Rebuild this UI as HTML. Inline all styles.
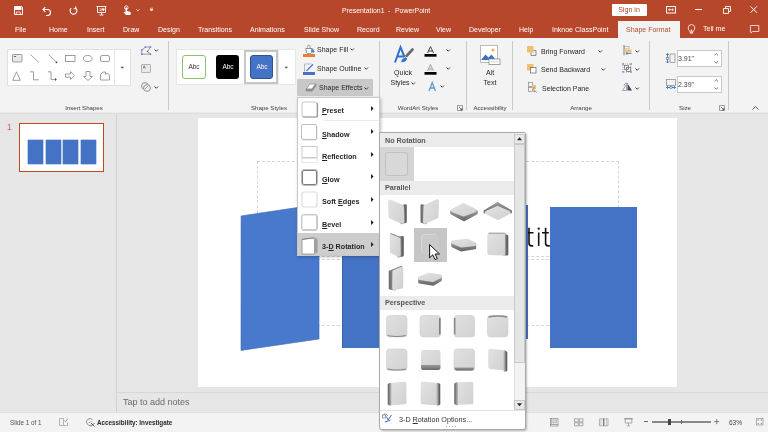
<!DOCTYPE html><html><head><meta charset="utf-8"><style>
html,body{margin:0;padding:0;}
body{width:768px;height:432px;overflow:hidden;position:relative;background:#E6E6E6;font-family:"Liberation Sans",sans-serif;}
.t{position:absolute;white-space:pre;will-change:transform;}
.r{position:absolute;}
svg.r{overflow:visible;}
u{text-decoration-thickness:0.6px;text-underline-offset:0.8px;}
</style></head><body>
<div class="r" style="left:0px;top:0px;width:768px;height:38px;background:#B7472A"></div>
<div class="r" style="left:0px;top:38px;width:768px;height:74px;background:#F3F3F3"></div>
<div class="r" style="left:0px;top:112px;width:768px;height:1px;background:#EBEBEB"></div>
<div class="r" style="left:0px;top:113px;width:768px;height:1px;background:#DEDEDE"></div>
<div class="r" style="left:0px;top:114px;width:768px;height:298px;background:#E6E6E6"></div>
<div class="r" style="left:116px;top:114px;width:1px;height:298px;background:#D2D2D2"></div>
<div class="r" style="left:198px;top:118px;width:479px;height:269px;background:#FFFFFF"></div>
<div class="r" style="left:117px;top:392px;width:651px;height:1px;background:#D6D6D6"></div>
<div class="r" style="left:0px;top:412px;width:768px;height:20px;background:#F3F3F3"></div>
<div class="r" style="left:0px;top:412px;width:768px;height:1px;background:#E0E0E0"></div>
<svg class="r" style="left:14px;top:6px;" width="9" height="9" viewBox="0 0 9 9"><path d="M0.5 0.5h7.3l0.7 0.7v7.3h-8z" fill="none" stroke="#fff" stroke-width="1"/><rect x="1" y="1" width="6.5" height="3" fill="#fff"/><path d="M2.3 8.5v-2.5h4v2.5" fill="none" stroke="#fff" stroke-width="0.8"/></svg>
<svg class="r" style="left:41px;top:6px;" width="10" height="9" viewBox="0 0 10 9"><path d="M2 3.5h4.5a3 3 0 0 1 0 6h-1.5 M4.3 1.2l-2.3 2.3l2.3 2.3" fill="none" stroke="#fff" stroke-width="1.1"/></svg>
<svg class="r" style="left:69px;top:6px;" width="9" height="9" viewBox="0 0 9 9"><path d="M6.8 2.2a3.4 3.4 0 1 1 -4.6 0 M6.8 0.6v2.2h-2.2" fill="none" stroke="#fff" stroke-width="1.1"/></svg>
<svg class="r" style="left:96px;top:6px;" width="11" height="9" viewBox="0 0 11 9"><path d="M0.5 0.5h10 M1.5 0.5v6h8v-6 M5.5 6.5v2.5 M3.5 9h4" fill="none" stroke="#fff" stroke-width="0.9"/><path d="M3.5 3h3 M3.5 4.5h2" stroke="#fff" stroke-width="0.8"/><circle cx="7.3" cy="3.6" r="1.3" fill="#fff"/></svg>
<svg class="r" style="left:123px;top:5px;" width="9" height="10" viewBox="0 0 9 10"><circle cx="3.3" cy="2.6" r="1.8" fill="none" stroke="#fff" stroke-width="0.8"/><path d="M2.5 2.8q0.8 -0.9 1.6 0v3.2l3 0.8q0.8 0.3 0.7 1.2l-0.4 2h-4.4l-2.2 -2.5q-0.3 -0.8 0.6 -0.8l1.1 0.6z" fill="#fff"/></svg>
<svg class="r" style="left:136px;top:9px;" width="4" height="3" viewBox="0 0 4 3"><path d="M0.3 0.3l1.6 1.6l1.6 -1.6" fill="none" stroke="#fff" stroke-width="0.8"/></svg>
<svg class="r" style="left:150px;top:8px;" width="4" height="4" viewBox="0 0 4 4"><path d="M0 0.2h3 M0 1.5h3l-1.5 1.5z" fill="#fff" stroke="#fff" stroke-width="0.6"/></svg>
<div class="t" style="left:341.50px;top:7.37px;font-size:6.9px;line-height:6.9px;color:#FFFFFF;font-weight:normal;margin-top:0.6px">Presentation1</div>
<div class="t" style="left:388.30px;top:7.37px;font-size:6.9px;line-height:6.9px;color:#FFFFFF;font-weight:normal;margin-top:0.6px">-</div>
<div class="t" style="left:395.10px;top:7.37px;font-size:6.9px;line-height:6.9px;color:#FFFFFF;font-weight:normal;margin-top:0.6px">PowerPoint</div>
<div class="r" style="left:612px;top:4px;width:35px;height:12px;background:#fff;border-radius:1px"></div>
<div class="t" style="left:529.20px;width:200px;text-align:center;top:7.48px;font-size:7.1px;line-height:7.1px;color:#B7472A;font-weight:normal;">Sign in</div>
<svg class="r" style="left:666px;top:6px;" width="10" height="8" viewBox="0 0 10 8"><rect x="0.5" y="0.5" width="9" height="6.5" fill="none" stroke="#fff" stroke-width="1"/><path d="M2.5 3.7h5 M3.7 2.5l-1.2 1.2l1.2 1.2 M6.3 2.5l1.2 1.2l-1.2 1.2" fill="none" stroke="#fff" stroke-width="0.8"/></svg>
<div class="r" style="left:695px;top:9px;width:7px;height:1px;background:#fff"></div>
<svg class="r" style="left:723px;top:6px;" width="8" height="8" viewBox="0 0 8 8"><path d="M0.5 2.5h5v5h-5z M2.5 2.5v-2h5v5h-2" fill="none" stroke="#fff" stroke-width="0.9"/></svg>
<svg class="r" style="left:750px;top:6px;" width="8" height="7" viewBox="0 0 8 7"><path d="M0.5 0.3l6.5 6.5 M7 0.3l-6.5 6.5" stroke="#fff" stroke-width="1"/></svg>
<div class="t" style="left:14.50px;top:25.93px;font-size:7px;line-height:7px;color:#FFFFFF;font-weight:normal;">File</div>
<div class="t" style="left:48.50px;top:25.93px;font-size:7px;line-height:7px;color:#FFFFFF;font-weight:normal;">Home</div>
<div class="t" style="left:86.50px;top:25.93px;font-size:7px;line-height:7px;color:#FFFFFF;font-weight:normal;">Insert</div>
<div class="t" style="left:122.50px;top:25.93px;font-size:7px;line-height:7px;color:#FFFFFF;font-weight:normal;">Draw</div>
<div class="t" style="left:157.50px;top:25.93px;font-size:7px;line-height:7px;color:#FFFFFF;font-weight:normal;">Design</div>
<div class="t" style="left:197.80px;top:25.93px;font-size:7px;line-height:7px;color:#FFFFFF;font-weight:normal;">Transitions</div>
<div class="t" style="left:249.80px;top:25.93px;font-size:7px;line-height:7px;color:#FFFFFF;font-weight:normal;">Animations</div>
<div class="t" style="left:303.50px;top:25.93px;font-size:7px;line-height:7px;color:#FFFFFF;font-weight:normal;">Slide Show</div>
<div class="t" style="left:356.50px;top:25.93px;font-size:7px;line-height:7px;color:#FFFFFF;font-weight:normal;">Record</div>
<div class="t" style="left:395.80px;top:25.93px;font-size:7px;line-height:7px;color:#FFFFFF;font-weight:normal;">Review</div>
<div class="t" style="left:435.80px;top:25.93px;font-size:7px;line-height:7px;color:#FFFFFF;font-weight:normal;">View</div>
<div class="t" style="left:468.80px;top:25.93px;font-size:7px;line-height:7px;color:#FFFFFF;font-weight:normal;">Developer</div>
<div class="t" style="left:519.10px;top:25.93px;font-size:7px;line-height:7px;color:#FFFFFF;font-weight:normal;">Help</div>
<div class="t" style="left:552.10px;top:25.93px;font-size:7px;line-height:7px;color:#FFFFFF;font-weight:normal;">Inknoe ClassPoint</div>
<div class="r" style="left:618px;top:21px;width:62px;height:17px;background:#F3F3F3"></div>
<div class="t" style="left:626.00px;top:25.93px;font-size:7px;line-height:7px;color:#B7472A;font-weight:normal;">Shape Format</div>
<svg class="r" style="left:687px;top:24px;" width="9" height="10" viewBox="0 0 9 10"><path d="M4.5 0.6a3.3 3.3 0 0 1 3.3 3.3c0 2 -2 3.3 -2.4 5.3h-1.8c-0.4 -2 -2.4 -3.3 -2.4 -5.3a3.3 3.3 0 0 1 3.3 -3.3z M3.6 9.2l0.9 -3.5l0.9 3.5" fill="none" stroke="#fff" stroke-width="0.8"/></svg>
<div class="t" style="left:702.50px;top:25.88px;font-size:7.1px;line-height:7.1px;color:#FFFFFF;font-weight:normal;">Tell me</div>
<svg class="r" style="left:750px;top:25px;" width="10" height="9" viewBox="0 0 10 9"><path d="M0.4 0.5h8.4v6h-6.2l-1.6 1.6v-1.6h-0.6z" fill="none" stroke="#fff" stroke-width="0.75"/></svg>
<div class="r" style="left:7px;top:49px;width:124px;height:37px;background:#FFFFFF;box-sizing:border-box;border:1px solid #E1E1E1"></div>
<div class="r" style="left:114px;top:50px;width:1px;height:35px;background:#E6E6E6"></div>
<svg class="r" style="left:12px;top:54px;" width="11" height="9" viewBox="0 0 11 9"><rect x="0.5" y="0.5" width="9.5" height="7.5" rx="0.8" fill="#E8E8E8" stroke="#858585" stroke-width="0.8"/><path d="M2 2.5h2" stroke="#2F6FD0" stroke-width="1.2"/></svg>
<svg class="r" style="left:30px;top:54px;" width="10" height="10" viewBox="0 0 10 10"><path d="M0.6 0.6l8.4 8" stroke="#858585" stroke-width="0.8"/></svg>
<svg class="r" style="left:48px;top:54px;" width="10" height="10" viewBox="0 0 10 10"><path d="M0.6 0.6l8 7.6" stroke="#858585" stroke-width="0.8"/><circle cx="8.5" cy="8.3" r="0.9" fill="#444"/></svg>
<svg class="r" style="left:65px;top:55px;" width="11" height="7" viewBox="0 0 11 7"><rect x="0.5" y="0.5" width="9.5" height="6" fill="none" stroke="#858585" stroke-width="0.8"/></svg>
<svg class="r" style="left:83px;top:55px;" width="10" height="8" viewBox="0 0 10 8"><ellipse cx="4.7" cy="3.5" rx="4.3" ry="3" fill="none" stroke="#858585" stroke-width="0.8"/></svg>
<svg class="r" style="left:100px;top:55px;" width="10" height="8" viewBox="0 0 10 8"><rect x="0.5" y="0.5" width="9" height="6" rx="1.5" fill="none" stroke="#858585" stroke-width="0.8"/></svg>
<svg class="r" style="left:12px;top:71px;" width="10" height="10" viewBox="0 0 10 10"><path d="M4.5 0.8l3.8 8.5h-7.6z" fill="none" stroke="#858585" stroke-width="0.8"/></svg>
<svg class="r" style="left:30px;top:71px;" width="10" height="10" viewBox="0 0 10 10"><path d="M0 0.8h3.5v8h5.3" fill="none" stroke="#858585" stroke-width="0.8"/></svg>
<svg class="r" style="left:48px;top:71px;" width="10" height="10" viewBox="0 0 10 10"><path d="M0 0.8h3v7.8h4.5" fill="none" stroke="#858585" stroke-width="0.8"/><path d="M7 7l1.8 1.6l-1.8 1.4z" fill="#444"/></svg>
<svg class="r" style="left:65px;top:71px;" width="10" height="10" viewBox="0 0 10 10"><path d="M0.5 3h5v-2.4l4 4l-4 4v-2.4h-5z" fill="none" stroke="#858585" stroke-width="0.8"/></svg>
<svg class="r" style="left:83px;top:71px;" width="10" height="10" viewBox="0 0 10 10"><path d="M3 0.5h4v5h2.4l-4.4 4l-4.4 -4h2.4z" fill="none" stroke="#858585" stroke-width="0.8"/></svg>
<svg class="r" style="left:100px;top:71px;" width="10" height="10" viewBox="0 0 10 10"><path d="M0.5 9h9v-4a2.2 2.2 0 0 0 -4 -1.5v-2.5h-2.5l-2.5 2.5z" fill="none" stroke="#858585" stroke-width="0.8"/></svg>
<svg class="r" style="left:120px;top:66px;" width="5" height="4" viewBox="0 0 5 4"><path d="M0.5 0.8h3.5l-1.75 1.9z" fill="#555"/></svg>
<svg class="r" style="left:140px;top:45px;" width="12" height="11" viewBox="0 0 12 11"><path d="M1.8 5l3.7 -3h5l-3 4.5l3 2.7h-8.7z" fill="none" stroke="#777" stroke-width="0.7"/><g fill="#2F6FD0"><circle cx="1.8" cy="5" r="0.8"/><circle cx="5.5" cy="2" r="0.8"/><circle cx="10.5" cy="2" r="0.8"/><circle cx="7.5" cy="6.5" r="0.8"/><circle cx="10.5" cy="9.2" r="0.8"/><circle cx="1.8" cy="9.2" r="0.8"/></g></svg>
<svg class="r" style="left:154px;top:49px;" width="5" height="3" viewBox="0 0 5 3"><path d="M0.5 0.5l1.75 1.75l1.75 -1.75" fill="none" stroke="#333" stroke-width="0.95"/></svg>
<svg class="r" style="left:141px;top:64px;" width="10" height="9" viewBox="0 0 10 9"><rect x="0.5" y="0.5" width="9" height="8" rx="0.6" fill="#E9E9E9" stroke="#9A9A9A" stroke-width="0.7"/><path d="M2 4.5l1.2 -2.8l1.2 2.8 M2.5 3.6h1.4" fill="none" stroke="#3C78D0" stroke-width="0.7"/></svg>
<svg class="r" style="left:141px;top:82px;" width="11" height="10" viewBox="0 0 11 10"><circle cx="4" cy="4" r="3.4" fill="none" stroke="#888" stroke-width="0.9"/><circle cx="6" cy="6" r="3.4" fill="#F3F3F3" stroke="#888" stroke-width="0.9"/><path d="M4 7l3 -3" stroke="#888" stroke-width="0.8"/></svg>
<svg class="r" style="left:154px;top:86px;" width="5" height="3" viewBox="0 0 5 3"><path d="M0.5 0.5l1.75 1.75l1.75 -1.75" fill="none" stroke="#333" stroke-width="0.95"/></svg>
<div class="t" style="left:-15.80px;width:200px;text-align:center;top:105.36px;font-size:6.1px;line-height:6.1px;color:#3A3A3A;font-weight:normal;">Insert Shapes</div>
<div class="r" style="left:168px;top:41px;width:1px;height:69px;background:#C9C9C9"></div>
<div class="r" style="left:176px;top:49px;width:120px;height:36px;background:#FFFFFF;box-sizing:border-box;border:1px solid #E6E6E6"></div>
<div class="r" style="left:278px;top:50px;width:1px;height:34px;background:#E9E9E9"></div>
<div class="r" style="left:182px;top:55px;width:24px;height:24px;box-sizing:border-box;border:1px solid #8CC168;border-radius:3px;background:#fff"></div>
<div class="t" style="left:94.00px;width:200px;text-align:center;top:64.17px;font-size:6.5px;line-height:6.5px;color:#333;font-weight:normal;">Abc</div>
<div class="r" style="left:216px;top:55px;width:23px;height:24px;background:#000;border-radius:3px"></div>
<div class="t" style="left:127.50px;width:200px;text-align:center;top:64.17px;font-size:6.5px;line-height:6.5px;color:#fff;font-weight:normal;">Abc</div>
<div class="r" style="left:244px;top:50px;width:34px;height:34px;box-sizing:border-box;border:2px solid #C6C6C6;background:#fff"></div>
<div class="r" style="left:250px;top:55px;width:23px;height:24px;background:#4472C4;border-radius:3px;box-sizing:border-box;border:1px solid #2F528F"></div>
<div class="t" style="left:161.50px;width:200px;text-align:center;top:64.17px;font-size:6.5px;line-height:6.5px;color:#fff;font-weight:normal;">Abc</div>
<svg class="r" style="left:284px;top:66px;" width="5" height="4" viewBox="0 0 5 4"><path d="M0.5 0.8h3.5l-1.75 1.9z" fill="#555"/></svg>
<div class="t" style="left:169.00px;width:200px;text-align:center;top:105.36px;font-size:6.1px;line-height:6.1px;color:#3A3A3A;font-weight:normal;">Shape Styles</div>
<svg class="r" style="left:303px;top:45px;" width="13" height="9" viewBox="0 0 13 9"><path d="M4.5 2.5v-1a1.3 1.3 0 0 1 2.6 0v2" fill="none" stroke="#777" stroke-width="0.7"/><path d="M2.8 3.5h6.5l-0.8 4.3q-0.3 0.8 -1.2 0.8h-2.5q-0.9 0 -1.2 -0.8z" fill="#fff" stroke="#777" stroke-width="0.8"/><path d="M8 3.5q3 0.5 3.5 3q-0.3 1.5 -1.5 1.3l-1.5 -1z" fill="#4A86D4"/></svg>
<div class="r" style="left:302.7px;top:54px;width:12.3px;height:2.6px;background:#ED7D31"></div>
<div class="t" style="left:317.00px;top:46.03px;font-size:7px;line-height:7px;color:#262626;font-weight:normal;">Shape Fill</div>
<svg class="r" style="left:350px;top:48px;" width="5" height="3" viewBox="0 0 5 3"><path d="M0.5 0.5l1.75 1.75l1.75 -1.75" fill="none" stroke="#333" stroke-width="0.95"/></svg>
<svg class="r" style="left:303px;top:63px;" width="13" height="9" viewBox="0 0 13 9"><path d="M1.5 8.5v-7.5h7" fill="none" stroke="#A5A5A5" stroke-width="0.8"/><path d="M3.5 7.8l6.5 -6.5" stroke="#2F6FD0" stroke-width="1.2"/></svg>
<div class="r" style="left:302.7px;top:72.1px;width:12.3px;height:2.7px;background:#4472C4"></div>
<div class="t" style="left:317.00px;top:64.53px;font-size:7px;line-height:7px;color:#262626;font-weight:normal;">Shape Outline</div>
<svg class="r" style="left:364px;top:67px;" width="5" height="3" viewBox="0 0 5 3"><path d="M0.5 0.5l1.75 1.75l1.75 -1.75" fill="none" stroke="#333" stroke-width="0.95"/></svg>
<div class="r" style="left:297px;top:79px;width:76px;height:17px;background:#C8C8C8;border-radius:1px"></div>
<svg class="r" style="left:304.5px;top:82.5px;" width="12" height="9" viewBox="0 0 12 9"><path d="M1.2 6.2l3.3 -4.7q0.4 -0.5 1 -0.5h5l-3.6 5.2z" fill="#fff" stroke="#8A8A8A" stroke-width="0.8" stroke-linejoin="round"/><path d="M1.2 6.2v1.2q0.2 0.7 0.9 0.7h5.1l3.7 -5.3v-1.8l-3.6 5.2z" fill="#9A9A9A" stroke="#7A7A7A" stroke-width="0.6" stroke-linejoin="round"/></svg>
<div class="t" style="left:318.50px;top:84.33px;font-size:7px;line-height:7px;color:#262626;font-weight:normal;">Shape Effects</div>
<svg class="r" style="left:364px;top:87px;" width="5" height="3" viewBox="0 0 5 3"><path d="M0.5 0.5l1.75 1.75l1.75 -1.75" fill="none" stroke="#333" stroke-width="0.95"/></svg>
<div class="r" style="left:379px;top:41px;width:1px;height:69px;background:#C9C9C9"></div>
<svg class="r" style="left:393px;top:46px;" width="21" height="18" viewBox="0 0 21 18"><path d="M2 16.5L7.5 1.2L12.5 13.5 M4.2 10.5h6.5" fill="none" stroke="#2F6FD0" stroke-width="2"/><path d="M19.5 3.5l-6 6.5" stroke="#6A6A6A" stroke-width="2.6" stroke-linecap="round"/><path d="M7.5 16.5q0.5 -4.5 5 -5.5l2 1.5q-1 4.5 -7 4z" fill="#2F6FD0" stroke="#fff" stroke-width="0.7"/></svg>
<div class="t" style="left:302.50px;width:200px;text-align:center;top:69.33px;font-size:7px;line-height:7px;color:#262626;font-weight:normal;">Quick</div>
<div class="t" style="left:299.60px;width:200px;text-align:center;top:79.03px;font-size:7px;line-height:7px;color:#262626;font-weight:normal;">Styles</div>
<svg class="r" style="left:410.5px;top:81.5px;" width="5" height="3" viewBox="0 0 5 3"><path d="M0.5 0.5l1.75 1.75l1.75 -1.75" fill="none" stroke="#333" stroke-width="0.95"/></svg>
<svg class="r" style="left:424px;top:46px;" width="14" height="11" viewBox="0 0 14 11"><path d="M3.5 7l3 -6.5l3 6.5 M4.6 5h3.8" fill="none" stroke="#333" stroke-width="0.9"/><rect x="0.5" y="8" width="12" height="2.7" fill="#000"/></svg>
<svg class="r" style="left:446px;top:49px;" width="5" height="3" viewBox="0 0 5 3"><path d="M0.5 0.5l1.75 1.75l1.75 -1.75" fill="none" stroke="#333" stroke-width="0.95"/></svg>
<svg class="r" style="left:424px;top:64px;" width="14" height="12" viewBox="0 0 14 12"><path d="M3.5 7l3 -6.5l3 6.5 M4.6 5h3.8" fill="none" stroke="#999" stroke-width="0.9"/><path d="M5.5 7l1 -3.5l1 3.5" fill="none" stroke="#BBB" stroke-width="0.6"/><rect x="0.5" y="8" width="12" height="2.7" fill="#000"/></svg>
<svg class="r" style="left:446px;top:67px;" width="5" height="3" viewBox="0 0 5 3"><path d="M0.5 0.5l1.75 1.75l1.75 -1.75" fill="none" stroke="#333" stroke-width="0.95"/></svg>
<svg class="r" style="left:428px;top:82px;" width="9" height="10" viewBox="0 0 9 10"><path d="M1 9l3.2 -8.5l3.2 8.5 M2.3 6h4" fill="none" stroke="#5B9BD5" stroke-width="1.3"/></svg>
<svg class="r" style="left:440px;top:85px;" width="5" height="3" viewBox="0 0 5 3"><path d="M0.5 0.5l1.75 1.75l1.75 -1.75" fill="none" stroke="#333" stroke-width="0.95"/></svg>
<div class="t" style="left:318.00px;width:200px;text-align:center;top:105.36px;font-size:6.1px;line-height:6.1px;color:#3A3A3A;font-weight:normal;">WordArt Styles</div>
<svg class="r" style="left:457px;top:105px;" width="6" height="6" viewBox="0 0 6 6"><path d="M0.5 0.5h5v5h-5z" fill="none" stroke="#777" stroke-width="0.7"/><path d="M2 2l3 3 M5 3v2h-2" fill="none" stroke="#555" stroke-width="0.8"/></svg>
<div class="r" style="left:466px;top:41px;width:1px;height:69px;background:#C9C9C9"></div>
<svg class="r" style="left:480px;top:45px;" width="21" height="20" viewBox="0 0 21 20"><rect x="0.5" y="0.5" width="17" height="17" fill="#fff" stroke="#ABABAB" stroke-width="0.8"/><path d="M1 15l4.5 -5.5l3 3l3 -3l4.5 5.5z" fill="#3C72B9"/><circle cx="13" cy="5" r="1.6" fill="#F2B24A"/><rect x="9" y="14" width="11" height="5.5" fill="#fff" stroke="#8A8A8A" stroke-width="0.8"/><path d="M10.5 16.8h8" stroke="#BBB" stroke-width="0.7"/></svg>
<div class="t" style="left:389.50px;width:200px;text-align:center;top:69.33px;font-size:7px;line-height:7px;color:#262626;font-weight:normal;">Alt</div>
<div class="t" style="left:390.00px;width:200px;text-align:center;top:79.03px;font-size:7px;line-height:7px;color:#262626;font-weight:normal;">Text</div>
<div class="t" style="left:389.50px;width:200px;text-align:center;top:105.36px;font-size:6.1px;line-height:6.1px;color:#3A3A3A;font-weight:normal;">Accessibility</div>
<div class="r" style="left:512px;top:41px;width:1px;height:69px;background:#C9C9C9"></div>
<svg class="r" style="left:527px;top:46px;" width="10" height="10" viewBox="0 0 10 10"><rect x="0" y="0" width="6.5" height="6.5" fill="#F0C070"/><path d="M4 6.5v3h5v-5h-2.5" fill="none" stroke="#666" stroke-width="0.7"/></svg>
<div class="t" style="left:540.50px;top:47.63px;font-size:7px;line-height:7px;color:#262626;font-weight:normal;">Bring Forward</div>
<svg class="r" style="left:598px;top:50px;" width="5" height="3" viewBox="0 0 5 3"><path d="M0.5 0.5l1.75 1.75l1.75 -1.75" fill="none" stroke="#333" stroke-width="0.95"/></svg>
<svg class="r" style="left:527px;top:64px;" width="10" height="10" viewBox="0 0 10 10"><rect x="0" y="0" width="6.5" height="6.5" fill="#F0C070"/><rect x="3.5" y="3.5" width="5.5" height="5.5" fill="#fff" stroke="#666" stroke-width="0.7"/></svg>
<div class="t" style="left:540.50px;top:65.88px;font-size:7px;line-height:7px;color:#262626;font-weight:normal;">Send Backward</div>
<svg class="r" style="left:601px;top:68px;" width="5" height="3" viewBox="0 0 5 3"><path d="M0.5 0.5l1.75 1.75l1.75 -1.75" fill="none" stroke="#333" stroke-width="0.95"/></svg>
<svg class="r" style="left:528px;top:82px;" width="11" height="11" viewBox="0 0 11 11"><rect x="0.5" y="0.5" width="4" height="4" fill="none" stroke="#888" stroke-width="0.7"/><rect x="0.5" y="5.5" width="4" height="4" fill="none" stroke="#888" stroke-width="0.7"/><rect x="4" y="3" width="4" height="4" fill="#F0C070"/><path d="M6 5l0 5l1.3 -1.2l1.2 1.8" fill="#fff" stroke="#555" stroke-width="0.6"/></svg>
<div class="t" style="left:542.00px;top:84.53px;font-size:7px;line-height:7px;color:#262626;font-weight:normal;">Selection Pane</div>
<svg class="r" style="left:623px;top:45px;" width="10" height="11" viewBox="0 0 10 11"><path d="M1 0v10.5" stroke="#777" stroke-width="0.9"/><rect x="1.5" y="1.5" width="4.5" height="2.5" fill="none" stroke="#999" stroke-width="0.6"/><rect x="1.5" y="4.5" width="7" height="3" fill="#F0C070"/><path d="M8.5 8.5h-5.5 M4.5 7l-1.5 1.5l1.5 1.5" fill="none" stroke="#2F6FD0" stroke-width="0.8"/></svg>
<svg class="r" style="left:635px;top:50px;" width="5" height="3" viewBox="0 0 5 3"><path d="M0.5 0.5l1.75 1.75l1.75 -1.75" fill="none" stroke="#333" stroke-width="0.95"/></svg>
<svg class="r" style="left:622px;top:63px;" width="11" height="11" viewBox="0 0 11 11"><path d="M1 1h8v8h-8z" fill="none" stroke="#777" stroke-width="0.6" stroke-dasharray="1 1"/><rect x="2.5" y="2.5" width="4" height="4" fill="none" stroke="#666" stroke-width="0.7"/><rect x="4.5" y="4.5" width="4" height="4" fill="none" stroke="#666" stroke-width="0.7"/><g fill="#2F6FD0"><rect x="0.3" y="0.3" width="1.3" height="1.3"/><rect x="8.4" y="0.3" width="1.3" height="1.3"/><rect x="0.3" y="8.4" width="1.3" height="1.3"/><rect x="8.4" y="8.4" width="1.3" height="1.3"/></g></svg>
<svg class="r" style="left:635px;top:68px;" width="5" height="3" viewBox="0 0 5 3"><path d="M0.5 0.5l1.75 1.75l1.75 -1.75" fill="none" stroke="#333" stroke-width="0.95"/></svg>
<svg class="r" style="left:622px;top:83px;" width="11" height="8" viewBox="0 0 11 8"><path d="M0.5 7.5l4 -6v6z" fill="none" stroke="#888" stroke-width="0.7"/><path d="M5.5 7.5v-7l4.5 7z" fill="#444"/><path d="M2 2.5a3 3 0 0 1 4 -2" fill="none" stroke="#2F6FD0" stroke-width="0.7"/></svg>
<svg class="r" style="left:635px;top:87px;" width="5" height="3" viewBox="0 0 5 3"><path d="M0.5 0.5l1.75 1.75l1.75 -1.75" fill="none" stroke="#333" stroke-width="0.95"/></svg>
<div class="t" style="left:480.80px;width:200px;text-align:center;top:105.36px;font-size:6.1px;line-height:6.1px;color:#3A3A3A;font-weight:normal;">Arrange</div>
<div class="r" style="left:649px;top:41px;width:1px;height:69px;background:#C9C9C9"></div>
<svg class="r" style="left:666px;top:53px;" width="10" height="11" viewBox="0 0 10 11"><path d="M1.5 0.5v9.5" stroke="#2F6FD0" stroke-width="0.9"/><path d="M0 2l1.5 -1.5l1.5 1.5 M0 8.5l1.5 1.5l1.5 -1.5" fill="none" stroke="#2F6FD0" stroke-width="0.8"/><rect x="4" y="1" width="5" height="8.5" fill="none" stroke="#888" stroke-width="0.7"/><rect x="0.7" y="4.3" width="1.6" height="2" fill="#fff" stroke="#555" stroke-width="0.5"/></svg>
<div class="r" style="left:677px;top:50px;width:45px;height:17px;background:#fff;box-sizing:border-box;border:1px solid #C8C8C8"></div>
<div class="t" style="left:678.30px;top:55.13px;font-size:7px;line-height:7px;color:#444;font-weight:normal;">3.91"</div>
<svg class="r" style="left:714px;top:53px;" width="5" height="3" viewBox="0 0 5 3"><path d="M0.4 2.4l1.8 -1.8l1.8 1.8" fill="none" stroke="#444" stroke-width="0.7"/></svg>
<svg class="r" style="left:714px;top:61px;" width="5" height="3" viewBox="0 0 5 3"><path d="M0.4 0.4l1.8 1.8l1.8 -1.8" fill="none" stroke="#444" stroke-width="0.7"/></svg>
<svg class="r" style="left:666px;top:79px;" width="10" height="11" viewBox="0 0 10 11"><rect x="0.5" y="0.5" width="9" height="6" fill="none" stroke="#888" stroke-width="0.7"/><path d="M0.5 8.5h9" stroke="#2F6FD0" stroke-width="0.9"/><path d="M2 7l-1.5 1.5l1.5 1.5 M8 7l1.5 1.5l-1.5 1.5" fill="none" stroke="#2F6FD0" stroke-width="0.8"/><rect x="4" y="7.7" width="2" height="1.6" fill="#fff" stroke="#555" stroke-width="0.5"/></svg>
<div class="r" style="left:677px;top:76px;width:45px;height:17px;background:#fff;box-sizing:border-box;border:1px solid #C8C8C8"></div>
<div class="t" style="left:678.30px;top:81.13px;font-size:7px;line-height:7px;color:#444;font-weight:normal;">2.39"</div>
<svg class="r" style="left:714px;top:79px;" width="5" height="3" viewBox="0 0 5 3"><path d="M0.4 2.4l1.8 -1.8l1.8 1.8" fill="none" stroke="#444" stroke-width="0.7"/></svg>
<svg class="r" style="left:714px;top:87px;" width="5" height="3" viewBox="0 0 5 3"><path d="M0.4 0.4l1.8 1.8l1.8 -1.8" fill="none" stroke="#444" stroke-width="0.7"/></svg>
<div class="t" style="left:584.50px;width:200px;text-align:center;top:105.36px;font-size:6.1px;line-height:6.1px;color:#3A3A3A;font-weight:normal;">Size</div>
<svg class="r" style="left:719px;top:105px;" width="6" height="6" viewBox="0 0 6 6"><path d="M0.5 0.5h5v5h-5z" fill="none" stroke="#777" stroke-width="0.7"/><path d="M2 2l3 3 M5 3v2h-2" fill="none" stroke="#555" stroke-width="0.8"/></svg>
<div class="r" style="left:728px;top:41px;width:1px;height:69px;background:#C9C9C9"></div>
<svg class="r" style="left:752px;top:106px;" width="7" height="4" viewBox="0 0 7 4"><path d="M0.5 3.5l3 -3l3 3" fill="none" stroke="#444" stroke-width="0.9"/></svg>
<div class="t" style="left:7.40px;top:123.35px;font-size:8.4px;line-height:8.4px;color:#D0603E;font-weight:normal;">1</div>
<div class="r" style="left:19.3px;top:122.7px;width:85.2px;height:49.6px;box-sizing:border-box;border:1.6px solid #C4461F;background:#fff"></div>
<div class="r" style="left:28px;top:140px;width:15px;height:24px;background:#4472C4;box-shadow:0 0 0 0.3px #3A64AE"></div>
<div class="r" style="left:46px;top:140px;width:15px;height:24px;background:#4472C4;box-shadow:0 0 0 0.3px #3A64AE"></div>
<div class="r" style="left:63px;top:140px;width:15px;height:24px;background:#4472C4;box-shadow:0 0 0 0.3px #3A64AE"></div>
<div class="r" style="left:81px;top:140px;width:15px;height:24px;background:#4472C4;box-shadow:0 0 0 0.3px #3A64AE"></div>
<div class="r" style="left:257px;top:161px;width:362px;height:96px;box-sizing:border-box;border:1px dashed #D5D5D5"></div>
<div class="r" style="left:257px;top:259px;width:362px;height:67px;box-sizing:border-box;border:1px dashed #D5D5D5"></div>
<svg class="r" style="left:520px;top:220px;" width="36" height="30" viewBox="0 0 36 30"><g fill="none" stroke="#111" stroke-width="1.6"><path d="M9 7.8v15.5q0 2.6 2.6 2.6h1.6 M7.2 12.8h6.3"/><path d="M18.7 12.5v13.4"/><path d="M25.6 7.8v15.5q0 2.6 2.6 2.6h1.6 M22 12.8h6.8"/></g><circle cx="18.7" cy="8.7" r="1.15" fill="#111"/></svg>
<svg class="r" style="left:240px;top:203px;" width="80" height="149" viewBox="0 0 80 149"><path d="M1.1 12.9L79 1.3V136L1 147.4z" fill="#4979CC" stroke="#3E67B3" stroke-width="0.6"/></svg>
<div class="r" style="left:341.7px;top:207px;width:86px;height:141px;background:#4472C4;box-shadow:inset 0.7px 0 0 #34599E"></div>
<div class="r" style="left:440px;top:204.5px;width:87.6px;height:134px;background:#4472C4"></div>
<div class="r" style="left:550px;top:207px;width:87px;height:141px;background:#4472C4"></div>
<div class="t" style="left:123.00px;top:398.26px;font-size:9px;line-height:9px;color:#6A6A6A;font-weight:normal;">Tap to add notes</div>
<div class="t" style="left:10.30px;top:420.06px;font-size:6.3px;line-height:6.3px;color:#505050;font-weight:normal;">Slide 1 of 1</div>
<svg class="r" style="left:59px;top:418px;" width="10" height="8" viewBox="0 0 10 8"><path d="M0.5 0.5h4v7h-4z M4.5 7.5h4v-3" fill="none" stroke="#8A8A8A" stroke-width="0.6"/><path d="M5.3 2.5l1.2 1.3l2.2 -3" fill="none" stroke="#666" stroke-width="0.6"/></svg>
<svg class="r" style="left:86px;top:418px;" width="9" height="9" viewBox="0 0 9 9"><path d="M6.5 1.8a3.4 3.4 0 1 0 -1 5.2" fill="none" stroke="#666" stroke-width="0.7"/><path d="M2.5 4l1 1l2 -2" fill="none" stroke="#777" stroke-width="0.6"/><path d="M5 5l3.5 3.5 M8.5 5l-3.5 3.5" fill="none" stroke="#333" stroke-width="0.75"/></svg>
<div class="t" style="left:96.50px;top:419.86px;font-size:6.3px;line-height:6.3px;color:#262626;font-weight:bold;">Accessibility: Investigate</div>
<svg class="r" style="left:550px;top:418px;" width="9" height="9" viewBox="0 0 9 9"><rect x="0.5" y="0.5" width="7.5" height="7.5" fill="none" stroke="#7A7A7A" stroke-width="0.6"/><path d="M0.5 6.5h7.5 M1.7 0.5v6" stroke="#7A7A7A" stroke-width="0.6"/><path d="M3 1.8h3.5v3h-3.5z M3.5 4.5l2.5 -2.3" fill="none" stroke="#8A8A8A" stroke-width="0.5"/></svg>
<svg class="r" style="left:574px;top:418px;" width="10" height="9" viewBox="0 0 10 9"><path d="M0.5 0.8h3.8v3h-3.8z M5.2 0.8h3.8v3h-3.8z M0.5 4.8h3.8v3h-3.8z M5.2 4.8h3.8v3h-3.8z" fill="none" stroke="#7A7A7A" stroke-width="0.6"/></svg>
<svg class="r" style="left:599px;top:418px;" width="10" height="9" viewBox="0 0 10 9"><path d="M0.5 0.8h8.5v7h-8.5z" fill="none" stroke="#8A8A8A" stroke-width="0.6"/><path d="M4.75 0.8v7" stroke="#666" stroke-width="1.2"/><path d="M2 1v6.5 M7.5 1v6.5" stroke="#AAA" stroke-width="0.6"/></svg>
<svg class="r" style="left:624px;top:418px;" width="9" height="9" viewBox="0 0 9 9"><path d="M0.3 0.8h8.4" stroke="#666" stroke-width="0.9"/><path d="M1.2 1v4h6.6v-4 M4.5 5v2.5 M2.8 7.8h3.4" fill="none" stroke="#7A7A7A" stroke-width="0.6"/></svg>
<div class="r" style="left:643.5px;top:421px;width:4.5px;height:1px;background:#666"></div>
<div class="r" style="left:651.5px;top:421px;width:59.5px;height:1.6px;background:#888"></div>
<div class="r" style="left:668px;top:418.6px;width:3.2px;height:6.9px;background:#444"></div>
<div class="r" style="left:681px;top:419.5px;width:0.8px;height:4px;background:#666"></div>
<svg class="r" style="left:713.5px;top:419px;" width="6" height="6" viewBox="0 0 6 6"><path d="M2.7 0v5.2 M0.2 2.6h5" stroke="#555" stroke-width="0.7"/></svg>
<div class="t" style="left:729.00px;top:419.87px;font-size:6.5px;line-height:6.5px;color:#444;font-weight:normal;">63%</div>
<svg class="r" style="left:756px;top:418px;" width="8" height="8" viewBox="0 0 8 8"><rect x="0.5" y="0.5" width="6.5" height="6.5" fill="none" stroke="#8C8C8C" stroke-width="0.65"/><path d="M2 2.5v-0.8h0.8 M5.5 2.5v-0.8h-0.8 M2 5v0.8h0.8 M5.5 5v0.8h-0.8" fill="none" stroke="#555" stroke-width="0.6"/></svg>
<div class="r" style="left:297px;top:97px;width:83px;height:159px;background:#fff;box-sizing:border-box;border:1px solid #C8C8C8;box-shadow:1px 1px 3px rgba(0,0,0,0.25)"></div>
<svg class="r" style="left:301px;top:101px;" width="17" height="17" viewBox="0 0 17 17"><rect x="1" y="1" width="15" height="15" rx="2" fill="#fff" stroke="#B5B5B5" stroke-width="0.8"/><path d="M2 16h13.5a1 1 0 0 0 1 -1v-13" fill="none" stroke="#999" stroke-width="1.2"/></svg>
<div class="t" style="left:322.00px;top:107.13px;font-size:7.2px;line-height:7.2px;color:#262626;font-weight:bold;"><u>P</u>reset</div>
<svg class="r" style="left:371px;top:106px;" width="3" height="5" viewBox="0 0 3 5"><path d="M0 0l2.6 2.5l-2.6 2.5z" fill="#222"/></svg>
<svg class="r" style="left:301px;top:124px;" width="17" height="17" viewBox="0 0 17 17"><rect x="1.5" y="1.5" width="15" height="15" rx="1.5" fill="#E2E2E2"/><rect x="0.5" y="0.5" width="15" height="15" rx="1.5" fill="#fff" stroke="#AFAFAF" stroke-width="0.8"/></svg>
<div class="t" style="left:322.00px;top:130.83px;font-size:7.2px;line-height:7.2px;color:#262626;font-weight:bold;"><u>S</u>hadow</div>
<svg class="r" style="left:371px;top:129px;" width="3" height="5" viewBox="0 0 3 5"><path d="M0 0l2.6 2.5l-2.6 2.5z" fill="#222"/></svg>
<svg class="r" style="left:301px;top:146px;" width="17" height="17" viewBox="0 0 17 17"><rect x="1" y="0.5" width="15" height="11" fill="#fff" stroke="#BDBDBD" stroke-width="0.8"/><rect x="1" y="12.5" width="15" height="4" fill="#fff" stroke="#E2E2E2" stroke-width="0.8"/></svg>
<div class="t" style="left:322.00px;top:153.23px;font-size:7.2px;line-height:7.2px;color:#262626;font-weight:bold;"><u>R</u>eflection</div>
<svg class="r" style="left:371px;top:152px;" width="3" height="5" viewBox="0 0 3 5"><path d="M0 0l2.6 2.5l-2.6 2.5z" fill="#222"/></svg>
<svg class="r" style="left:301px;top:169px;" width="17" height="17" viewBox="0 0 17 17"><rect x="0.5" y="0.5" width="16" height="16" rx="2" fill="#fff" stroke="#BDBDBD" stroke-width="1"/><rect x="1.5" y="1.5" width="14" height="14" rx="1.5" fill="#fff" stroke="#6E6E6E" stroke-width="0.9"/></svg>
<div class="t" style="left:322.00px;top:175.63px;font-size:7.2px;line-height:7.2px;color:#262626;font-weight:bold;"><u>G</u>low</div>
<svg class="r" style="left:371px;top:174px;" width="3" height="5" viewBox="0 0 3 5"><path d="M0 0l2.6 2.5l-2.6 2.5z" fill="#222"/></svg>
<svg class="r" style="left:301px;top:191px;" width="17" height="17" viewBox="0 0 17 17"><rect x="1" y="1" width="15" height="15" rx="2" fill="#fff" stroke="#DCDCDC" stroke-width="1.2"/></svg>
<div class="t" style="left:322.00px;top:198.33px;font-size:7.2px;line-height:7.2px;color:#262626;font-weight:bold;">Soft <u>E</u>dges</div>
<svg class="r" style="left:371px;top:197px;" width="3" height="5" viewBox="0 0 3 5"><path d="M0 0l2.6 2.5l-2.6 2.5z" fill="#222"/></svg>
<svg class="r" style="left:301px;top:214px;" width="17" height="17" viewBox="0 0 17 17"><rect x="0.8" y="0.8" width="15.4" height="15.4" rx="1.5" fill="#fff" stroke="#A5A5A5" stroke-width="0.9"/><path d="M1.5 15.5h14v-14" fill="none" stroke="#C8C8C8" stroke-width="0.9"/></svg>
<div class="t" style="left:322.00px;top:220.73px;font-size:7.2px;line-height:7.2px;color:#262626;font-weight:bold;"><u>B</u>evel</div>
<svg class="r" style="left:371px;top:220px;" width="3" height="5" viewBox="0 0 3 5"><path d="M0 0l2.6 2.5l-2.6 2.5z" fill="#222"/></svg>
<div class="r" style="left:298px;top:233px;width:81px;height:22px;background:#CDCDCD"></div>
<svg class="r" style="left:301px;top:237px;" width="17" height="17" viewBox="0 0 17 17"><path d="M1 2.5l12 -1.5l3 1.5v13l-3 1.5h-12z" fill="#fff" stroke="#8A8A8A" stroke-width="0.8"/><path d="M13 1v15.5l3 -1.5v-13z" fill="#A0A0A0"/><path d="M1 2.5c4 -1 8 -1.2 12 -1.5" fill="none" stroke="#777" stroke-width="0.8"/></svg>
<div class="t" style="left:322.00px;top:243.03px;font-size:7.2px;line-height:7.2px;color:#262626;font-weight:bold;">3-<u>D</u> Rotation</div>
<svg class="r" style="left:371px;top:242px;" width="3" height="5" viewBox="0 0 3 5"><path d="M0 0l2.6 2.5l-2.6 2.5z" fill="#222"/></svg>
<div class="r" style="left:324px;top:120px;width:55px;height:1px;background:#EBEBEB"></div>
<div class="r" style="left:379px;top:132px;width:147px;height:298px;background:#fff;box-sizing:border-box;border:1px solid #A9A9A9;border-radius:0 2px 3px 3px;box-shadow:1px 1px 2px rgba(0,0,0,0.25)"></div>
<div class="r" style="left:380px;top:133px;width:134px;height:14px;background:#EBEBEB"></div>
<div class="t" style="left:384.80px;top:136.73px;font-size:7.2px;line-height:7.2px;color:#555;font-weight:bold;">No Rotation</div>
<div class="r" style="left:380px;top:147px;width:33.5px;height:33.5px;background:#D5D5D5"></div>
<div class="r" style="left:385px;top:152px;width:23px;height:23.5px;background:#D8D8D8;box-sizing:border-box;border:1px solid #C0C0C0;border-radius:3px"></div>
<div class="r" style="left:380px;top:181px;width:134px;height:14px;background:#EBEBEB"></div>
<div class="t" style="left:384.80px;top:184.33px;font-size:7.2px;line-height:7.2px;color:#555;font-weight:bold;">Parallel</div>
<div class="r" style="left:380px;top:295.5px;width:134px;height:14px;background:#EBEBEB"></div>
<div class="t" style="left:384.80px;top:299.23px;font-size:7.2px;line-height:7.2px;color:#555;font-weight:bold;">Perspective</div>
<div class="r" style="left:413.5px;top:228.3px;width:33.7px;height:33.7px;background:#C6C6C6"></div>
<svg class="r" style="left:0;top:0" width="768" height="432" viewBox="0 0 768 432"><defs><linearGradient id="sh" x1="0" y1="0" x2="1" y2="0"><stop offset="0" stop-color="#6E6E6E"/><stop offset="1" stop-color="#A5A5A5"/></linearGradient><linearGradient id="shr" x1="0" y1="0" x2="1" y2="0"><stop offset="0" stop-color="#A8A8A8"/><stop offset="1" stop-color="#5E5E5E"/></linearGradient><linearGradient id="shv" x1="0" y1="0" x2="0" y2="1"><stop offset="0" stop-color="#9A9A9A"/><stop offset="1" stop-color="#6A6A6A"/></linearGradient><linearGradient id="fc" x1="0" y1="0" x2="1" y2="1"><stop offset="0" stop-color="#E0E0E0"/><stop offset="1" stop-color="#D2D2D2"/></linearGradient></defs><polygon points="401.28,206.01 405.74,205.32 405.71,221.79 401.25,223.28" fill="url(#shr)" stroke="url(#shr)" stroke-width="2.10" stroke-linejoin="round"/><polygon points="390.02,201.66 402.02,206.77 402.48,221.84 390.48,216.73" fill="url(#fc)" stroke="url(#fc)" stroke-width="3.90" stroke-linejoin="round"/><polygon points="421.54,205.32 425.74,206.02 425.76,223.28 421.57,221.79" fill="url(#sh)" stroke="url(#sh)" stroke-width="2.10" stroke-linejoin="round"/><polygon points="425.47,206.78 437.03,201.19 436.56,216.69 424.99,221.82" fill="url(#fc)" stroke="url(#fc)" stroke-width="3.90" stroke-linejoin="round"/><polygon points="451,211 451,213.5 464,220.5 477,213.5 477,211 464,216.5" fill="url(#shv)" stroke="url(#shv)" stroke-width="1.6" stroke-linejoin="round"/><polygon points="452.95,210.44 463.57,204.95 474.55,210.44 463.92,214.55" fill="url(#fc)" stroke="url(#fc)" stroke-width="3.90" stroke-linejoin="round"/><polygon points="484.5,211 497.5,203 511,211 511,212.5 497.5,206.5 484.5,212.5" fill="url(#shv)" stroke="url(#shv)" stroke-width="1.8" stroke-linejoin="round"/><polygon points="486.95,212.54 497.57,207.95 508.55,212.54 497.93,218.05" fill="url(#fc)" stroke="url(#fc)" stroke-width="3.90" stroke-linejoin="round"/><polygon points="398.26,238.02 402.76,237.02 402.74,255.48 398.24,256.48" fill="url(#shr)" stroke="url(#shr)" stroke-width="2.10" stroke-linejoin="round"/><polygon points="391.68,235.83 398.57,239.22 398.80,254.68 391.90,251.77" fill="url(#fc)" stroke="url(#fc)" stroke-width="3.90" stroke-linejoin="round"/><path d="M390.5 233.5l9 3.5l2.5 -0.5" fill="none" stroke="#8E8E8E" stroke-width="1.2"/><rect x="421" y="234.5" width="19" height="20.5" rx="3" fill="#CACACA" stroke="#BEBEBE" stroke-width="0.6"/><path d="M421.5 252v-14.5q0 -3 3 -3h12" fill="none" stroke="#D6D6D6" stroke-width="1.2"/><polygon points="452.42,242.44 452.50,246.05 460.99,250.21 475.01,248.14 475.02,244.49 461.67,246.72" fill="url(#shv)" stroke="url(#shv)" stroke-width="2.40" stroke-linejoin="round"/><polygon points="452.89,242.07 466.98,240.43 474.61,244.13 461.70,245.76" fill="url(#fc)" stroke="url(#fc)" stroke-width="3.60" stroke-linejoin="round"/><polygon points="503.21,235.03 507.27,236.02 507.28,254.47 503.22,254.47" fill="url(#shr)" stroke="url(#shr)" stroke-width="2.10" stroke-linejoin="round"/><polygon points="489.21,235.53 503.29,235.53 503.30,253.46 489.23,252.99" fill="url(#fc)" stroke="url(#fc)" stroke-width="3.90" stroke-linejoin="round"/><path d="M488.5 233.2h16l2 1.5" fill="none" stroke="#8E8E8E" stroke-width="1"/><polygon points="389.80,271.51 394.74,270.02 394.74,289.48 389.79,288.49" fill="url(#sh)" stroke="url(#sh)" stroke-width="2.10" stroke-linejoin="round"/><polygon points="394.35,271.75 401.36,268.34 401.22,286.71 394.19,288.18" fill="url(#fc)" stroke="url(#fc)" stroke-width="3.90" stroke-linejoin="round"/><path d="M390 271l3.5 -1.5l8.5 -3.5" fill="none" stroke="#8E8E8E" stroke-width="1.2"/><polygon points="419.38,278.70 419.39,282.34 433.41,284.45 440.60,280.26 440.70,276.77 432.84,281.18" fill="url(#shv)" stroke="url(#shv)" stroke-width="2.40" stroke-linejoin="round"/><polygon points="419.79,278.24 428.75,274.53 440.21,276.37 432.84,280.12" fill="url(#fc)" stroke="url(#fc)" stroke-width="3.60" stroke-linejoin="round"/></svg>
<svg class="r" style="left:0;top:0" width="768" height="432" viewBox="0 0 768 432"><rect x="386.5" y="315.5" width="20.5" height="21.5" rx="3" fill="url(#fc)" stroke="#CFCFCF" stroke-width="0.6"/><path d="M387.5 335.5q9.25 2 18.5 0" fill="none" stroke="#8A8A8A" stroke-width="1.1"/><rect x="420" y="315.5" width="20.5" height="21.5" rx="3" fill="url(#fc)" stroke="#CFCFCF" stroke-width="0.6"/><path d="M439.8 318.0v16.5" fill="none" stroke="#7E7E7E" stroke-width="1.6"/><rect x="454" y="315.5" width="20.5" height="21.5" rx="3" fill="url(#fc)" stroke="#CFCFCF" stroke-width="0.6"/><path d="M454.7 318.0v16.5" fill="none" stroke="#8A8A8A" stroke-width="1.6"/><rect x="487.5" y="315.5" width="20.5" height="21.5" rx="3" fill="url(#fc)" stroke="#CFCFCF" stroke-width="0.6"/><path d="M488.5 317.0q9.25 -2 18.5 0" fill="none" stroke="#8A8A8A" stroke-width="1.3"/><rect x="386.5" y="349" width="20.5" height="21.5" rx="3" fill="url(#fc)" stroke="#CFCFCF" stroke-width="0.6"/><path d="M387.5 369.0q9.25 2 18.5 0" fill="none" stroke="#8A8A8A" stroke-width="1.1"/><path d="M421 352.5q0 -2.5 2.5 -2.5h14.5q2.5 0 2.5 2.5v12.5h-19.5z" fill="url(#fc)"/><path d="M421 365h19.5v2.8q0 2.2 -2.2 2.2h-15.1q-2.2 0 -2.2 -2.2z" fill="url(#shv)"/><rect x="454" y="349" width="20.5" height="21.5" rx="3" fill="url(#fc)" stroke="#CFCFCF" stroke-width="0.6"/><path d="M454.5 367.5h19.5v1.2q0 1.8 -2.2 1.8h-15.1q-2.2 0 -2.2 -1.8z" fill="url(#shv)"/><polygon points="490.11,350.60 502.28,352.02 502.39,368.40 490.22,366.98" fill="url(#fc)" stroke="url(#fc)" stroke-width="3.90" stroke-linejoin="round"/><polygon points="504.5,351 506.5,352.5 506.5,370.5 504.5,371" fill="url(#shr)" stroke="url(#shr)" stroke-width="1.6" stroke-linejoin="round"/><polygon points="392.58,384.62 404.49,383.67 404.42,402.38 392.51,403.33" fill="url(#fc)" stroke="url(#fc)" stroke-width="3.90" stroke-linejoin="round"/><polygon points="388.5,384.5 390.5,383.5 390.5,405 388.5,404" fill="url(#sh)" stroke="url(#sh)" stroke-width="1.6" stroke-linejoin="round"/><polygon points="422.57,383.63 435.37,384.59 435.43,403.37 422.63,402.41" fill="url(#fc)" stroke="url(#fc)" stroke-width="3.90" stroke-linejoin="round"/><polygon points="437.5,383.5 439.5,384.5 439.5,404 437.5,405" fill="url(#shr)" stroke="url(#shr)" stroke-width="1.6" stroke-linejoin="round"/><polygon points="459.09,384.12 471.44,383.64 471.41,402.38 459.06,402.86" fill="url(#fc)" stroke="url(#fc)" stroke-width="3.90" stroke-linejoin="round"/><polygon points="455,384 457,383 457,404.5 455,403.5" fill="url(#sh)" stroke="url(#sh)" stroke-width="1.6" stroke-linejoin="round"/></svg>
<svg class="r" style="left:428.5px;top:243.5px;" width="12" height="17" viewBox="0 0 12 17"><path d="M0.6 0.6v13.2l3.2 -3l2.3 4.8l2.2 -1l-2.2 -4.6h4.4z" fill="#fff" stroke="#111" stroke-width="1" stroke-linejoin="round"/></svg>
<div class="r" style="left:514px;top:133px;width:11px;height:277px;background:#F3F3F3;box-sizing:border-box;border-left:1px solid #E0E0E0"></div>
<div class="r" style="left:514px;top:133.5px;width:10.5px;height:10px;background:#E9E9E9;box-sizing:border-box;border:1px solid #C8C8C8"></div>
<svg class="r" style="left:517px;top:137px;" width="6" height="4" viewBox="0 0 6 4"><path d="M0 3.2h5l-2.5 -3z" fill="#222"/></svg>
<div class="r" style="left:514px;top:143.5px;width:10.5px;height:219px;background:#E6E6E6;box-sizing:border-box;border:1px solid #C8C8C8"></div>
<div class="r" style="left:514px;top:400px;width:10.5px;height:10px;background:#E9E9E9;box-sizing:border-box;border:1px solid #C8C8C8"></div>
<svg class="r" style="left:517px;top:403px;" width="6" height="4" viewBox="0 0 6 4"><path d="M0 0.3h5l-2.5 3z" fill="#222"/></svg>
<div class="r" style="left:380px;top:410px;width:145px;height:1px;background:#E3E3E3"></div>
<svg class="r" style="left:382px;top:413px;" width="11" height="10" viewBox="0 0 11 10"><path d="M1.5 1.5a2.5 2.5 0 0 1 4 1.2" fill="none" stroke="#777" stroke-width="0.8"/><path d="M4.5 3.5l1.5 3.5l3.5 -5 M3 9l5.5 -2" fill="none" stroke="#2F6FD0" stroke-width="1"/><rect x="0.5" y="2" width="3" height="3" fill="none" stroke="#666" stroke-width="0.6"/></svg>
<div class="t" style="left:399.00px;top:415.73px;font-size:7.2px;line-height:7.2px;color:#333;font-weight:normal;">3-D <u>R</u>otation Options...</div>
<svg class="r" style="left:446px;top:426px;" width="12" height="2" viewBox="0 0 12 2"><g fill="#AAA"><rect x="0" y="0" width="1" height="1"/><rect x="3" y="0" width="1" height="1"/><rect x="6" y="0" width="1" height="1"/><rect x="9" y="0" width="1" height="1"/></g></svg>
</body></html>
